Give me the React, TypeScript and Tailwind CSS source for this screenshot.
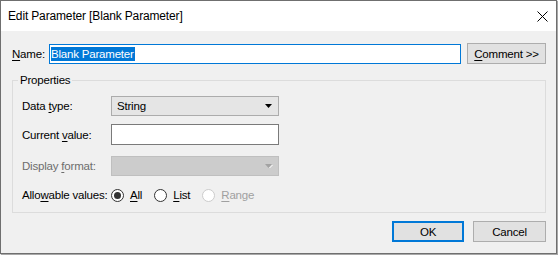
import type { ReactNode } from 'react'

const FONT = 'font-["Liberation_Sans",Arial,sans-serif]'

function U({ children }: { children: ReactNode }) {
  return <span className="underline underline-offset-[2px] decoration-[1px]">{children}</span>
}

function Label({ className = '', children }: { className?: string; children: ReactNode }) {
  return (
    <div className={`flex items-center whitespace-nowrap ${className}`}>
      <span>{children}</span>
    </div>
  )
}

function Arrow({ disabled }: { disabled?: boolean }) {
  return (
    <svg width="9" height="5" viewBox="0 0 9 5" className="mr-[5px]">
      {disabled ? (
        <>
          <path d="M1 0 L8 0 L4.5 4 Z" fill="#a3a3a3" />
          <path d="M5.5 4 L8.5 1" stroke="#ffffff" strokeWidth="1" />
        </>
      ) : (
        <path d="M1 0 L8 0 L4.5 4 Z" fill="#000000" />
      )}
    </svg>
  )
}

function Radio({ checked, disabled, children }: { checked?: boolean; disabled?: boolean; children: ReactNode }) {
  return (
    <div className={`flex items-center gap-[6px] ${disabled ? 'text-[#a0a0a0]' : 'text-black'}`}>
      <span
        className={`w-[13px] h-[13px] rounded-full border bg-white flex items-center justify-center ${
          disabled ? 'border-[#cccccc]' : 'border-[#333333]'
        }`}
      >
        {checked && <span className="w-[7px] h-[7px] rounded-full bg-[#333333]" />}
      </span>
      <span>{children}</span>
    </div>
  )
}

export default function App() {
  return (
    <div className={`${FONT} text-[11.5px] tracking-[-0.2px] leading-[16px] text-black w-[558px] h-[255px] bg-[#f0f0f0]`}>
      <div className="w-[557px] h-[254px] border border-[#6f6f6f] flex flex-col bg-[#f0f0f0] shadow-[1px_1px_0_#a8a8a8]">
        {/* Title bar */}
        <div className="h-[30px] bg-white flex items-center justify-between pl-[7px] pr-[8px]">
          <span className="text-[12px] tracking-[-0.15px]">Edit Parameter [Blank Parameter]</span>
          <svg width="11" height="11" viewBox="0 0 11 11">
            <path d="M0.5 0.5 L10.5 10.5 M10.5 0.5 L0.5 10.5" stroke="#000" strokeWidth="1" />
          </svg>
        </div>

        <div className="flex-1 flex flex-col pl-[11px] pr-[10px] pt-[12px]">
          {/* Name row */}
          <div className="flex items-center h-[21px]">
            <Label className="w-[37px]">
              <U>N</U>ame:
            </Label>
            <div className="flex-1 h-[20px] border border-[#0078d7] bg-white flex items-center pl-[1px]">
              <span className="bg-[#0078d7] text-white h-[14px] leading-[14px] pr-[1px]">Blank Parameter</span>
            </div>
            <button className="ml-[6px] w-[79px] h-[21px] border border-[#adadad] bg-[#e1e1e1] flex items-center justify-center">
              <span>
                <U>C</U>omment &gt;&gt;
              </span>
            </button>
          </div>

          {/* Properties group */}
          <fieldset className="mt-[8px] border border-[#dcdcdc] pl-[9px] pb-[7px]">
            <legend className="-ml-[4px] px-[2px] leading-[16px]">Properties</legend>
            <div className="pt-[8px] grid grid-cols-[89px_168px]">
              <Label className="h-[20px]">
                Data <U>t</U>ype:
              </Label>
              <div className="h-[20px] border border-[#acacac] bg-[#e5e5e5] flex items-center justify-between pl-[5px]">
                <span>String</span>
                <Arrow />
              </div>

              <Label className="mt-[8px] h-[21px]">
                Current <U>v</U>alue:
              </Label>
              <div className="mt-[8px] h-[21px] border border-[#7a7a7a] bg-white" />

              <Label className="mt-[11px] h-[20px] text-[#6d6d6d]">
                Display <U>f</U>ormat:
              </Label>
              <div className="mt-[11px] h-[20px] border border-[#bfbfbf] bg-[#cccccc] flex items-center justify-end">
                <Arrow disabled />
              </div>

              <Label className="mt-[9px] h-[20px]">
                Allo<U>w</U>able values:
              </Label>
              <div className="mt-[9px] h-[20px] flex items-center gap-[12px]">
                <Radio checked>
                  <U>A</U>ll
                </Radio>
                <Radio>
                  <U>L</U>ist
                </Radio>
                <Radio disabled>
                  <U>R</U>ange
                </Radio>
              </div>
            </div>
          </fieldset>

          {/* Buttons */}
          <div className="mt-[8px] flex justify-end gap-[9px]">
            <button className="w-[72px] h-[21px] border-2 border-[#0078d7] bg-[#e1e1e1] flex items-center justify-center">
              OK
            </button>
            <button className="w-[73px] h-[21px] border border-[#adadad] bg-[#e1e1e1] flex items-center justify-center">
              Cancel
            </button>
          </div>
        </div>
      </div>
    </div>
  )
}
